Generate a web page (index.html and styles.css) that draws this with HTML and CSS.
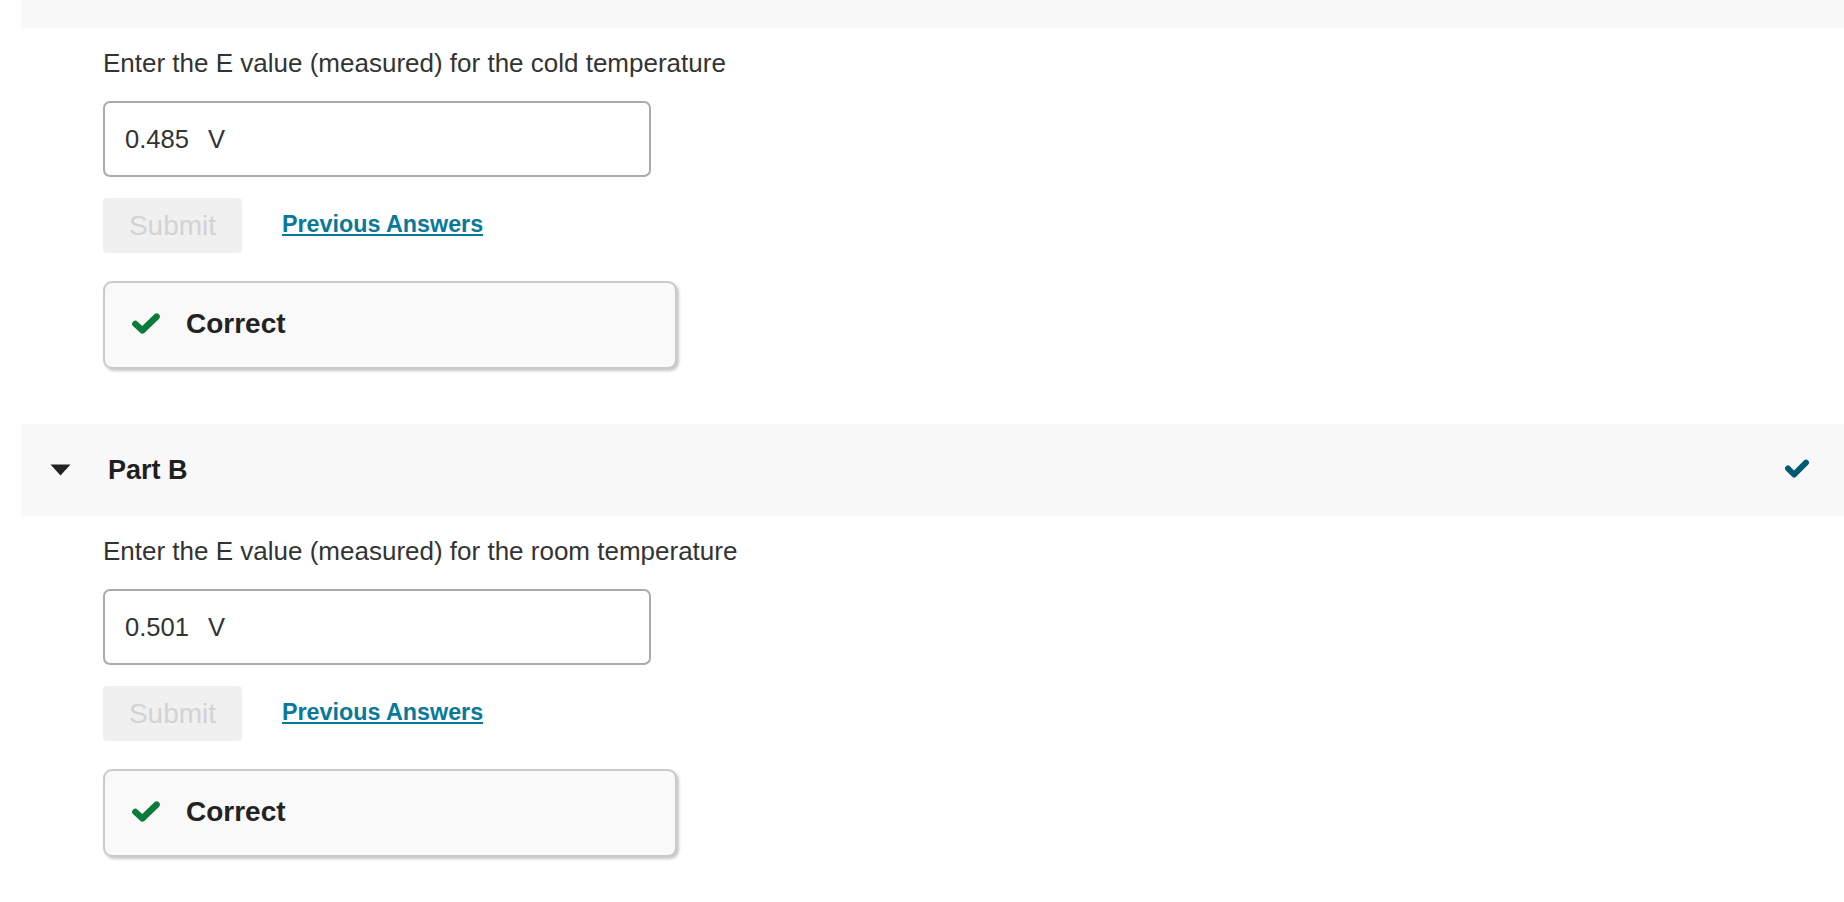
FILE: index.html
```html
<!DOCTYPE html>
<html lang="en">
<head>
<meta charset="utf-8">
<title>Parts</title>
<link rel="stylesheet" href="styles.css">
</head>
<body>
<div class="page">
  <div class="band band-top"></div>
  <div class="part-body">
    <p class="prompt">Enter the E value (measured) for the cold temperature</p>
    <div class="answer-input"><span class="num">0.485</span><span class="unit">V</span></div>
    <div class="actions">
      <button class="submit" disabled>Submit</button>
      <a class="prev" href="#">Previous Answers</a>
    </div>
    <div class="feedback">
      <svg class="ok-icon" width="28" height="21" viewBox="0 0 28 21"><polyline points="3.4,11 10.4,17.4 24.6,3.6" fill="none" stroke="#0a7b3a" stroke-width="6.4" stroke-linecap="round" stroke-linejoin="round"/></svg>
      <span class="feedback-text">Correct</span>
    </div>
  </div>

  <div class="band band-header">
    <svg class="caret" width="21" height="12" viewBox="0 0 21 12"><polygon points="0.5,0.5 20.5,0.5 10.5,11.5" fill="#222"/></svg>
    <span class="part-title">Part B</span>
    <svg class="done-icon" width="24" height="20" viewBox="0 0 24 20"><polyline points="3,9.4 9,15.6 21,3.6" fill="none" stroke="#005a70" stroke-width="5.8" stroke-linecap="round" stroke-linejoin="round"/></svg>
  </div>
  <div class="part-body">
    <p class="prompt">Enter the E value (measured) for the room temperature</p>
    <div class="answer-input"><span class="num">0.501</span><span class="unit">V</span></div>
    <div class="actions">
      <button class="submit" disabled>Submit</button>
      <a class="prev" href="#">Previous Answers</a>
    </div>
    <div class="feedback">
      <svg class="ok-icon" width="28" height="21" viewBox="0 0 28 21"><polyline points="3.4,11 10.4,17.4 24.6,3.6" fill="none" stroke="#0a7b3a" stroke-width="6.4" stroke-linecap="round" stroke-linejoin="round"/></svg>
      <span class="feedback-text">Correct</span>
    </div>
  </div>
</div>
</body>
</html>
```

FILE: styles.css
```css
html, body {
  margin: 0;
  padding: 0;
  background: #ffffff;
}

body {
  font-family: "Liberation Sans", Arial, Helvetica, sans-serif;
  color: #333333;
}

.page {
  margin-left: 21px;
}

.band {
  background: #f8f8f8;
}

.band-top {
  height: 28px;
}

.band-header {
  height: 92px;
  display: flex;
  align-items: center;
  padding-left: 29px;
}

.caret {
  display: block;
  flex: none;
}

.part-title {
  margin-left: 37px;
  font-size: 27px;
  font-weight: bold;
  color: #1f1f1f;
}

.done-icon {
  display: block;
  margin-left: auto;
  margin-right: 35px;
  margin-top: -3px;
}

.part-body {
  padding: 17px 0 55px 82px;
}

.prompt {
  margin: 0;
  font-size: 26px;
  line-height: 36px;
  color: #333333;
}

.answer-input {
  margin-top: 20px;
  box-sizing: border-box;
  width: 548px;
  height: 76px;
  border: 2px solid #ababab;
  border-radius: 7px;
  background: #ffffff;
  display: flex;
  align-items: center;
  padding-left: 20px;
  font-size: 25.6px;
  color: #333333;
}

.unit {
  margin-left: 19px;
}

.actions {
  margin-top: 21px;
  display: flex;
  align-items: center;
  gap: 40px;
}

.submit {
  width: 139px;
  height: 55px;
  padding: 0;
  border: 0;
  border-radius: 4px;
  background: #f0f0f0;
  color: #d3d3d3;
  font-family: "Liberation Sans", Arial, sans-serif;
  font-size: 28px;
}

.prev {
  font-size: 23.3px;
  font-weight: bold;
  color: #077a9c;
  text-decoration: underline;
  text-decoration-thickness: 2px;
  text-underline-offset: 2px;
  margin-top: -3px;
}

.feedback {
  margin-top: 28px;
  box-sizing: border-box;
  width: 574px;
  height: 88px;
  border: 2px solid #cacaca;
  border-radius: 9px;
  background: #f9f9f9;
  box-shadow: 2px 2px 3px rgba(0, 0, 0, 0.22);
  display: flex;
  align-items: center;
  padding-left: 27px;
  gap: 26px;
}

.ok-icon {
  display: block;
  margin-top: -3px;
}

.feedback-text {
  font-size: 28px;
  font-weight: bold;
  color: #222222;
  margin-top: -3px;
}
```
